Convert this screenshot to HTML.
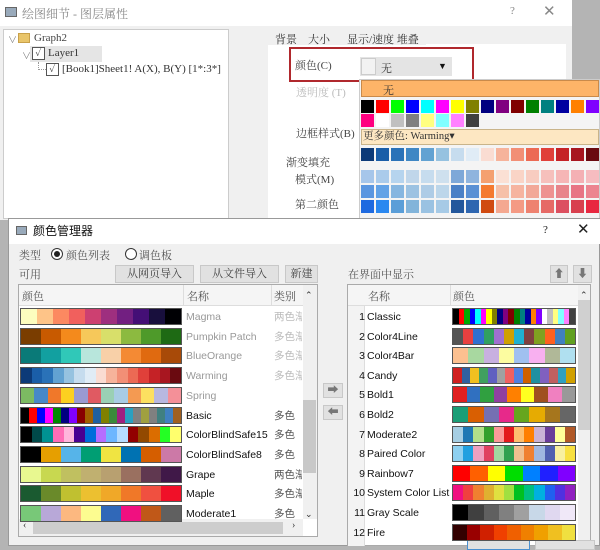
<!DOCTYPE html>
<html><head><meta charset="utf-8">
<style>
*{margin:0;padding:0;box-sizing:border-box}
body{width:600px;height:546px;overflow:hidden;background:#b4b4b4;position:relative;font-family:"Liberation Serif","Noto Serif CJK SC",serif;font-size:11px;color:#333}
.a{position:absolute}
.sw{position:absolute;display:flex}
.sw div{flex:1}
.cjk{font-family:"Liberation Sans","Noto Sans CJK SC",sans-serif}
.btn{position:absolute;background:#e1e1e1;border:1px solid #c8c8c8;text-align:center;line-height:16px;color:#444}
.row{position:absolute;height:20px;line-height:20px;font-family:"Liberation Sans",sans-serif;font-size:10.5px;color:#111}
</style></head><body>
<div class="a" style="left:0;top:0;width:572px;height:220px;background:#f0f0f0"></div>
<div class="a" style="left:0;top:0;width:572px;height:26px;background:#fff"></div>
<div class="a" style="left:5px;top:7px;width:12px;height:10px;border:1px solid #666;background:#9ab"></div>
<div class="a" style="left:22px;top:5px;color:#888;font-size:12px">绘图细节 - 图层属性</div>
<div class="a" style="left:510px;top:5px;color:#888">?</div>
<div class="a" style="left:543px;top:2px;color:#888;font-size:15px">✕</div>
<div class="a" style="left:3px;top:29px;width:226px;height:190px;background:#fff;border:1px solid #ccc"></div>
<div class="a" style="left:8px;top:33px;color:#555;font-size:9px">∨</div>
<div class="a" style="left:18px;top:33px;width:12px;height:10px;background:#e9c56a;border:1px solid #c9a14a"></div>
<div class="a" style="left:34px;top:32px;color:#444">Graph2</div>
<div class="a" style="left:22px;top:49px;color:#555;font-size:9px">∨</div>
<div class="a" style="left:30px;top:46px;width:72px;height:16px;background:#e5e5e5"></div>
<div class="a" style="left:32px;top:47px;width:13px;height:13px;border:1px solid #555;background:#fff;font-size:10px;line-height:11px;text-align:center">✓</div>
<div class="a" style="left:48px;top:47px;color:#333">Layer1</div>
<div class="a" style="left:38px;top:62px;width:8px;height:8px;border-left:1px dotted #999;border-bottom:1px dotted #999"></div>
<div class="a" style="left:46px;top:63px;width:13px;height:13px;border:1px solid #555;background:#fff;font-size:10px;line-height:11px;text-align:center">✓</div>
<div class="a" style="left:62px;top:63px;color:#333">[Book1]Sheet1! A(X), B(Y) [1*:3*]</div>
<div class="a" style="left:268px;top:44px;width:298px;height:176px;background:#fff"></div>
<div class="a" style="left:266px;top:29px;width:160px;height:16px;background:#f0f0f0"></div>
<div class="a" style="left:275px;top:31px;color:#333">背景</div>
<div class="a" style="left:308px;top:31px;color:#333">大小</div>
<div class="a" style="left:347px;top:31px;color:#333">显示/速度 堆叠</div>
<div class="a" style="left:289px;top:47px;width:185px;height:35px;border:2px solid #b0282d"></div>
<div class="a" style="left:295px;top:57px;color:#444">颜色(C)</div>
<div class="a" style="left:360px;top:57px;width:92px;height:19px;background:#e4e4e4"></div>
<div class="a" style="left:361px;top:58px;width:15px;height:17px;background:#f2f2f2;border:1px solid #ccc"></div>
<div class="a" style="left:381px;top:60px;color:#333">无</div>
<div class="a" style="left:438px;top:61px;font-size:9px;color:#111">▼</div>
<div class="a" style="left:296px;top:84px;color:#bbb">透明度 (T)</div>
<div class="a" style="left:296px;top:125px;color:#444">边框样式(B)</div>
<div class="a" style="left:286px;top:154px;color:#444">渐变填充</div>
<div class="a" style="left:295px;top:171px;color:#444">模式(M)</div>
<div class="a" style="left:295px;top:196px;color:#444">第二颜色</div>
<div class="a" style="left:359px;top:79px;width:241px;height:141px;background:#f4f4f4;border:1px solid #ccc"></div>
<div class="a" style="left:361px;top:80px;width:238px;height:17px;background:#fdb468;border:1px solid #c98a4a"></div>
<div class="a" style="left:383px;top:82px;color:#333">无</div>
<div class="a" style="left:361px;top:129px;width:238px;height:16px;background:#fde7c2;border:1px solid #c9b48a;color:#333;font-size:10.5px;padding-left:1px;line-height:14px">更多颜色: Warming▾</div>
<div class="a" style="left:8px;top:218px;width:592px;height:328px;background:#f0f0f0;border:1px solid #999"></div>
<div class="a" style="left:9px;top:219px;width:591px;height:25px;background:#fff"></div>
<div class="a" style="left:16px;top:226px;width:11px;height:9px;border:1px solid #666;background:#9ab"></div>
<div class="a cjk" style="left:33px;top:222px;color:#111;font-size:12px">颜色管理器</div>
<div class="a" style="left:543px;top:224px;color:#222">?</div>
<div class="a" style="left:577px;top:220px;color:#222;font-size:15px">✕</div>
<div class="a" style="left:19px;top:247px;color:#555">类型</div>
<div class="a" style="left:51px;top:248px;width:12px;height:12px;border:1px solid #333;border-radius:50%;background:#fff"></div>
<div class="a" style="left:54px;top:251px;width:6px;height:6px;border-radius:50%;background:#222"></div>
<div class="a" style="left:66px;top:247px;color:#555">颜色列表</div>
<div class="a" style="left:125px;top:248px;width:12px;height:12px;border:1px solid #333;border-radius:50%;background:#fff"></div>
<div class="a" style="left:139px;top:247px;color:#555">调色板</div>
<div class="a" style="left:19px;top:266px;color:#555">可用</div>
<div class="btn" style="left:115px;top:265px;width:79px;height:18px">从网页导入</div>
<div class="btn" style="left:200px;top:265px;width:79px;height:18px">从文件导入</div>
<div class="btn" style="left:285px;top:265px;width:33px;height:18px">新建</div>
<div class="a" style="left:18px;top:284px;width:300px;height:253px;background:#fff;border:1px solid #aaa"></div>
<div class="a" style="left:19px;top:285px;width:298px;height:21px;background:#f5f5f5;border-bottom:1px solid #ddd"></div>
<div class="a" style="left:22px;top:288px;color:#555">颜色</div>
<div class="a" style="left:183px;top:285px;width:1px;height:21px;background:#ddd"></div>
<div class="a" style="left:187px;top:288px;color:#555">名称</div>
<div class="a" style="left:271px;top:285px;width:1px;height:21px;background:#ddd"></div>
<div class="a" style="left:274px;top:288px;color:#555">类别</div>
<div class="a" style="left:303px;top:285px;width:14px;height:234px;background:#f0f0f0"></div>
<div class="a" style="left:305px;top:290px;font-size:9px">⌃</div>
<div class="a" style="left:303px;top:400px;width:13px;height:73px;background:#c8c8c8"></div>
<div class="a" style="left:305px;top:509px;font-size:9px">⌄</div>
<div class="a" style="left:19px;top:519px;width:284px;height:17px;background:#f0f0f0"></div>
<div class="a" style="left:33px;top:522px;width:250px;height:12px;background:#cdcdcd"></div>
<div class="a" style="left:23px;top:520px;font-size:10px">‹</div>
<div class="a" style="left:292px;top:520px;font-size:10px">›</div>
<div class="btn" style="left:323px;top:383px;width:20px;height:15px;line-height:12px;color:#777">➡</div>
<div class="btn" style="left:323px;top:405px;width:20px;height:15px;line-height:12px;color:#777">⬅</div>
<div class="a" style="left:348px;top:266px;color:#555">在界面中显示</div>
<div class="btn" style="left:550px;top:265px;width:18px;height:18px;color:#777">⬆</div>
<div class="btn" style="left:573px;top:265px;width:19px;height:18px;color:#777">⬇</div>
<div class="a" style="left:347px;top:284px;width:244px;height:262px;background:#fff;border:1px solid #aaa"></div>
<div class="a" style="left:348px;top:285px;width:242px;height:21px;background:#f5f5f5;border-bottom:1px solid #ddd"></div>
<div class="a" style="left:348px;top:306px;width:17px;height:240px;background:#f3f3f3;border-right:1px solid #ddd"></div>
<div class="a" style="left:368px;top:288px;color:#555">名称</div>
<div class="a" style="left:450px;top:285px;width:1px;height:21px;background:#ddd"></div>
<div class="a" style="left:453px;top:288px;color:#555">颜色</div>
<div class="a" style="left:578px;top:285px;width:12px;height:261px;background:#f0f0f0"></div>
<div class="a" style="left:580px;top:290px;font-size:9px">⌃</div>
<div class="a" style="left:578px;top:300px;width:12px;height:130px;background:#d0d0d0"></div>
<div class="btn" style="left:467px;top:540px;width:63px;height:10px;border-color:#4a90d0"></div>
<div class="btn" style="left:535px;top:540px;width:60px;height:10px"></div>
<script>
function sw(x,y,w,h,cols,border){var d=document.createElement('div');d.className='sw';d.style.cssText='left:'+x+'px;top:'+y+'px;width:'+w+'px;height:'+h+'px;'+(border?'border:1px solid #555;':'');cols.forEach(function(c){var e=document.createElement('div');e.style.background=c;d.appendChild(e)});document.body.appendChild(d)}
function sq(x,y,c,s){var d=document.createElement('div');d.className='a';d.style.cssText='left:'+x+'px;top:'+y+'px;width:'+(s||13)+'px;height:'+(s||13)+'px;background:'+c;document.body.appendChild(d)}
var r1=['#000','#f00','#0f0','#00f','#0ff','#f0f','#ff0','#808000','#000080','#800080','#800000','#008000','#008080','#0000a0','#ff8000','#8000ff'];
r1.forEach(function(c,i){sq(361+i*15,100,c)});
['#ff0080','#fff','#c0c0c0','#808080','#ffff80','#80ffff','#ff80ff','#404040'].forEach(function(c,i){sq(361+i*15,114,c)});
var w=['#0c3a78','#1a5ea8','#2a72b8','#3f87c4','#62a2d2','#96c2e0','#c6dcee','#e0ecf6','#fadcd2','#f6b39b','#f28f76','#ec6a54','#e0403a','#c52226','#a81620','#6a0a10'];
w.forEach(function(c,i){sq(361+i*15,148,c)});
var g=[['#a6c6ea','#aacbeb','#b6d4ee','#c0d6ea','#c6dcee','#cee0ee','#7ea8d8','#8fb4de','#f4a070','#fbe0d4','#fad4c6','#f8ccc0','#f6c0bc','#f6b6b6','#f4b0b4','#f6bcc0'],
['#5a96e0','#62a2e6','#86b6e0','#9cc2e2','#aecce6','#bcd6ea','#4a80c6','#5a90d4','#f47a30','#f6c0a8','#f6b4a0','#f2a898','#ee9290','#e8848a','#e87484','#ec8490'],
['#1e6ae0','#2a88f0','#5a9ed8','#82b4da','#9ac2e2','#a6cae6','#23579c','#2e66b0','#d04a10','#f4a890','#f49a84','#ee8270','#e66a66','#dc5060','#d8404e','#e82840']];
g.forEach(function(r,j){r.forEach(function(c,i){sq(361+i*15,170+j*15,c)})});
var L=[['Magma','两色渐',['#fcfdbf','#fec488','#fc8961','#f1605d','#cd4071','#9e2f7f','#721f81','#440f76','#180f3d','#000004'],1],
['Pumpkin Patch','多色渐',['#7a3d00','#c85a00','#f48a1c','#f6c85a','#d8df6a','#8cba40','#4e9a2a','#1e6a14'],1],
['BlueOrange','多色渐',['#0a7a78','#12a0a0','#30c8b8','#b8e6dc','#f8d0a8','#f48a34','#e06a10','#a84a08'],1],
['Warming','多色渐',['#0c3a78','#1a5ea8','#2a72b8','#62a2d2','#96c2e0','#c6dcee','#e0ecf6','#fadcd2','#f6b39b','#f28f76','#ec6a54','#e0403a','#c52226','#a81620','#6a0a10'],1],
['Spring','',['#7cba62','#4688c8','#f0782a','#fcd020','#9a9ad2','#e05a62','#9ad0b4','#a8cce4','#f49a52','#fce060','#b8b8e0','#f49098'],1],
['Basic','多色',['#000','#f00','#00f','#f0f','#080','#000080','#8000ff','#800','#a06000','#2060a0','#808000','#3a8a3a','#a02080','#2aa0c0','#808080','#a0a040','#808080','#408080','#4080c0','#a06020'],0],
['ColorBlindSafe15','多色',['#000','#004949','#009292','#ff6db6','#ffb6db','#490092','#006ddb','#b66dff','#6db6ff','#b6dbff','#920000','#924900','#db6d00','#24ff24','#ffff6d'],0],
['ColorBlindSafe8','多色',['#000','#e69f00','#56b4e9','#009e73','#f0e442','#0072b2','#d55e00','#cc79a7'],0],
['Grape','两色渐',['#e8f890','#c8d850','#c0c060','#c0b070','#b8a070','#9a7060','#603850','#401848'],0],
['Maple','多色渐',['#1a5a30','#6a8a2a','#c0c030','#ecc030','#f0a828','#f07828','#f05040','#f01028'],0],
['Moderate1','多色',['#78c878','#b8a8d8','#fcb880','#fcfc90','#3068b8','#f01080','#c05818','#606060'],0]];
L.forEach(function(r,i){var y=307+i*19.7;sw(20,y+1,162,17,r[2],1);
var n=document.createElement('div');n.className='row';n.style.cssText='left:186px;top:'+y+'px;color:'+(r[3]?'#999':'#111');n.textContent=r[0];document.body.appendChild(n);
var c=document.createElement('div');c.className='row cjk';c.style.cssText='left:274px;top:'+y+'px;width:28px;overflow:hidden;white-space:nowrap;color:'+(r[3]?'#bbb':'#555');c.textContent=r[1];document.body.appendChild(c)});
var R=[['Classic',['#000','#f00','#0a0','#00f','#0ff','#f0f','#ff0','#808000','#000080','#800080','#800000','#008000','#008080','#0000a0','#ff8000','#8000ff','#fff','#c0c0c0','#ffff80','#80ffff','#ff80ff','#404040']],
['Color4Line',['#555','#e84040','#3070d0','#30a060','#a070d0','#d0a000','#20b0d0','#804040','#80a020','#ff6020','#4080c0','#60a020']],
['Color4Bar',['#fcc090','#a8d8a0','#c8b0e0','#fcfca0','#a0c0f0','#f8b0f0','#b0b898','#b0e0f0']],
['Candy',['#d02020','#3060a0','#f0c020','#40a060','#6060c0','#a0a0a0','#f06060','#5080e0','#d06000','#2090a0','#8060c0','#c06060','#30a0c0','#d0a000']],
['Bold1',['#e02020','#3070c0','#30a040','#9040a0','#ff8000','#ffff20','#a05020','#f080c0','#999']],
['Bold2',['#1b9e77','#d95f02','#7570b3','#e7298a','#66a61e','#e6ab02','#a6761d','#666']],
['Moderate2',['#a6cee3','#1f78b4','#b2df8a','#33a02c','#fb9a99','#e31a1c','#fdbf6f','#ff7f00','#cab2d6','#6a3d9a','#ffff99','#b15928']],
['Paired Color',['#8ed0f0','#20a0e0','#f0a0c0','#e04060','#a0d8a0','#30a050','#f0c090','#f08030','#a0b8e0','#5060b0','#f8f0a0','#f8e040']],
['Rainbow7',['#f00','#ff6000','#ff0','#0d0','#0080ff','#2020ff','#8000ff']],
['System Color List',['#f01080','#f04040','#f08030','#e0b030','#e0e040','#a0e040','#00c020','#00c080','#00b0e0','#2060f0','#5030e0','#9020c0']],
['Gray Scale',['#000','#404040','#606060','#808080','#a0a0a0','#c8d8e8','#e0d8f0','#f0e8f8']],
['Fire',['#300','#900','#d02000','#f04000','#f06000','#f08000','#f0a000','#f0c020','#f0e040']]];
R.forEach(function(r,i){var y=307+i*19.6;sw(452,y+1,124,17,r[1],1);
var n=document.createElement('div');n.className='row';n.style.cssText='left:348px;width:17px;text-align:right;top:'+y+'px';n.textContent=i+1;document.body.appendChild(n);
var m=document.createElement('div');m.className='row';m.style.cssText='left:367px;top:'+y+'px';m.textContent=r[0];document.body.appendChild(m)});
</script>
</body></html>
